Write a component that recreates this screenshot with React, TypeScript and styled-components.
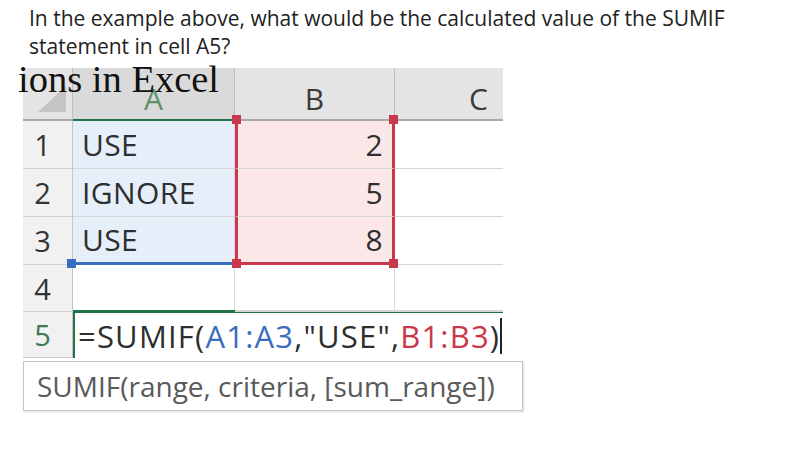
import styled, { createGlobalStyle } from 'styled-components';

const GlobalStyle = createGlobalStyle`
  body {
    margin: 0;
    background: #ffffff;
  }
`

const Page = styled.div`
  width: 785px;
  height: 460px;
  overflow: hidden;
  background: #fff;
`
const Question = styled.p`
  margin: 4px 0 0 29px;
  font-family: 'Open Sans', sans-serif;
  font-size: 21px;
  line-height: 28px;
  color: #222;
  width: 712px;
`
const Figure = styled.div`
  position: relative;
  margin: 8px 0 0 23px;
  width: 502px;
`
const Heading = styled.div`
  position: absolute;
  left: -5px;
  top: -9px;
  font-family: 'Liberation Serif', serif;
  font-size: 38.5px;
  line-height: 40px;
  color: #111;
  white-space: nowrap;
  z-index: 3;
`
const Sheet = styled.div`
  display: grid;
  grid-template-columns: 50px 162px 160px 108px;
  grid-template-rows: 53px 48px 48px 48px 47px 46px;
  font-family: 'Open Sans', sans-serif;
  color: #333;
`
const ColHead = styled.div<{ $active?: boolean; $edge?: boolean }>`
  position: relative;
  display: flex;
  align-items: center;
  justify-content: ${p => (p.$edge ? 'flex-end' : 'center')};
  padding: 10px ${p => (p.$edge ? '15px' : '0')} 0 0;
  background: ${p => (p.$active ? '#dadada' : '#e4e4e4')};
  border-right: ${p => (p.$edge ? 'none' : '1px solid #bdbdbd')};
  border-bottom: 2px solid ${p => (p.$active ? '#217346' : '#a9a9a9')};
  font-size: 30px;
  color: ${p => (p.$active ? '#5f8f6f' : '#3a3a3a')};
`
const Corner = styled.div`
  position: relative;
  background: #e4e4e4;
  border-right: 1px solid #bdbdbd;
  border-bottom: 2px solid #a9a9a9;
  &::after {
    content: '';
    position: absolute;
    right: 6px;
    bottom: 7px;
    border-style: solid;
    border-width: 0 0 26px 28px;
    border-color: transparent transparent #c4c4c4 transparent;
  }
`
const RowHead = styled.div<{ $active?: boolean }>`
  display: flex;
  align-items: center;
  justify-content: center;
  padding-right: 10px;
  background: #f1f1f1;
  border-right: 1px solid #c4c4c4;
  border-bottom: 1px solid #d0d0d0;
  font-size: 29px;
  color: ${p => (p.$active ? '#3f7a55' : '#333')};
`
const Cell = styled.div<{
  $bg?: string
  $right?: boolean
  $red?: boolean
  $redBottom?: boolean
  $blueBottom?: boolean
  $edge?: boolean
}>`
  position: relative;
  display: flex;
  align-items: center;
  justify-content: ${p => (p.$right ? 'flex-end' : 'flex-start')};
  padding: 0 9px;
  background: ${p => p.$bg || '#fff'};
  border-bottom: ${p =>
    p.$redBottom ? '3px solid #c9394b' : p.$blueBottom ? '3px solid #3a6cc0' : '1px solid #d6d6d6'};
  border-left: ${p => (p.$red ? '3px solid #c9394b' : 'none')};
  border-right: ${p => (p.$red ? '3px solid #c9394b' : p.$edge ? 'none' : '1px solid #dadada')};
  font-size: 30px;
  letter-spacing: 0.4px;
  color: #2e2e2e;
`
const Handle = styled.span<{ $color: string; $x: 'left' | 'right'; $y: 'top' | 'bottom' }>`
  position: absolute;
  ${p => p.$x}: -6px;
  ${p => p.$y}: -6px;
  width: 9px;
  height: 9px;
  background: ${p => p.$color};
  z-index: 2;
`
const FormulaCell = styled.div`
  grid-column: 2 / 5;
  display: flex;
  align-items: center;
  border-left: 2px solid #217346;
  border-top: 3px solid #217346;
  padding-left: 3px;
  font-size: 31px;
  letter-spacing: 1.2px;
  white-space: nowrap;
  color: #2e2e2e;
  margin-top: -2px;
  position: relative;
  &::after {
    content: '';
    position: absolute;
    left: 160px;
    right: 0;
    top: -3px;
    height: 2px;
    background: #d6d6d6;
  }
`
const Ref = styled.span<{ $color: string }>`
  color: ${p => p.$color};
`
const Caret = styled.span`
  display: inline-block;
  flex: none;
  width: 2px;
  height: 36px;
  background: #222;
`
const Tip = styled.div`
  margin-top: 3px;
  width: 500px;
  height: 50px;
  box-sizing: border-box;
  border: 1px solid #c6c6c6;
  box-shadow: 1px 1px 2px rgba(0, 0, 0, 0.15);
  display: flex;
  align-items: center;
  padding-left: 13px;
  font-family: 'Open Sans', sans-serif;
  font-size: 28px;
  color: #5a5a5a;
  background: #fff;
  white-space: nowrap;
`

const blue = '#e6eefa'
const pink = '#fbe6e8'

const App = () => {
  return (
    <Page>
      <GlobalStyle />
      <Question>
        In the example above, what would be the calculated value of the SUMIF statement in cell A5?
      </Question>
      <Figure>
        <Heading>ions in Excel</Heading>
        <Sheet>
          <Corner />
          <ColHead $active>A</ColHead>
          <ColHead>B</ColHead>
          <ColHead $edge>C</ColHead>

          <RowHead>1</RowHead>
          <Cell $bg={blue}>USE</Cell>
          <Cell $bg={pink} $right $red>
            2
            <Handle $color="#c9394b" $x="left" $y="top" />
            <Handle $color="#c9394b" $x="right" $y="top" />
          </Cell>
          <Cell $edge />

          <RowHead>2</RowHead>
          <Cell $bg={blue}>IGNORE</Cell>
          <Cell $bg={pink} $right $red>5</Cell>
          <Cell $edge />

          <RowHead>3</RowHead>
          <Cell $bg={blue} $blueBottom>
            USE
            <Handle $color="#3a6cc0" $x="left" $y="bottom" />
          </Cell>
          <Cell $bg={pink} $right $red $redBottom>
            8
            <Handle $color="#c9394b" $x="left" $y="bottom" />
            <Handle $color="#c9394b" $x="right" $y="bottom" />
          </Cell>
          <Cell $edge />

          <RowHead>4</RowHead>
          <Cell />
          <Cell />
          <Cell $edge />

          <RowHead $active>5</RowHead>
          <FormulaCell>
            =SUMIF(<Ref $color="#3a6cc0">A1:A3</Ref>,"USE",<Ref $color="#c9394b">B1:B3</Ref>)
            <Caret />
          </FormulaCell>
        </Sheet>
        <Tip>SUMIF(range, criteria, [sum_range])</Tip>
      </Figure>
    </Page>
  )
}

export default App
